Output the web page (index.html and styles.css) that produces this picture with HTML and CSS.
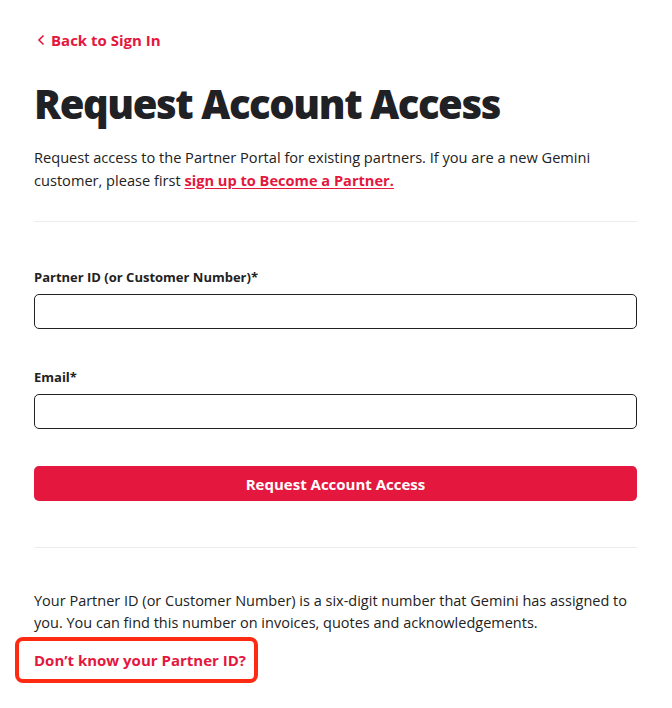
FILE: index.html
```html
<!DOCTYPE html>
<html lang="en">
<head>
<meta charset="utf-8">
<link rel="stylesheet" href="styles.css">
<title>Request Account Access</title>
</head>
<body>
<main class="page">
  <a class="back" href="#"><svg class="chev" width="8" height="12" viewBox="0 0 8 12"><path d="M6.5 1.5 L2 6 L6.5 10.5" fill="none" stroke="currentColor" stroke-width="1.6"/></svg>Back to Sign In</a>
  <h1 class="title">Request Account Access</h1>
  <p class="intro">Request access to the Partner Portal for existing partners. If you are a new Gemini customer, please first <a class="inline-link" href="#">sign up to Become a Partner.</a></p>
  <hr class="rule">
  <form class="form">
    <label class="field">
      <span class="label">Partner ID (or Customer Number)*</span>
      <input class="input" type="text">
    </label>
    <label class="field">
      <span class="label">Email*</span>
      <input class="input" type="email">
    </label>
    <button class="submit" type="button">Request Account Access</button>
  </form>
  <hr class="rule rule-bottom">
  <p class="help">Your Partner ID (or Customer Number) is a six-digit number that Gemini has assigned to you. You can find this number on invoices, quotes and acknowledgements.</p>
  <a class="dont-know" href="#">Don’t know your Partner ID?</a>
</main>
</body>
</html>
```
FILE: styles.css
```css
* { box-sizing: border-box; }
html, body { margin: 0; padding: 0; background: #fff; }
body { font-family: "Open Sans", "Noto Sans", sans-serif; color: #222; }
.page { padding: 30px 35px 0 34px; display: flex; flex-direction: column; align-items: flex-start; }
.back { display: flex; align-items: center; gap: 6px; color: #e4173e; font-weight: 700; font-size: 15px; text-decoration: none; line-height: 20px; padding-left: 3px; }
.chev { display: block; }
.title { margin: 26px 0 0; font-size: 40px; font-weight: 800; line-height: 56px; color: #1f2124; letter-spacing: -1.4px; }
.intro { margin: 14px 0 0; font-size: 14.6px; line-height: 23px; }
.inline-link { color: #e4173e; font-weight: 700; text-decoration: underline; text-underline-offset: 2px; }
.rule { align-self: stretch; border: 0; border-top: 1px solid #ececec; margin: 29px 0 0; }
.form { align-self: stretch; display: flex; flex-direction: column; margin-top: 45px; }
.field { display: flex; flex-direction: column; gap: 7px; margin-bottom: 38px; }
.field + .field { margin-bottom: 37px; }
.label { font-size: 13px; font-weight: 700; line-height: 20px; color: #222; }
.input { height: 35px; border: 1px solid #222; border-radius: 5px; font: inherit; padding: 0 10px; }
.submit { height: 35px; border: 0; border-radius: 5px; background: #e4173e; color: #fff; font-family: inherit; font-weight: 700; font-size: 15px; }
.rule-bottom { margin-top: 46px; }
.help { margin: 42px 0 0; font-size: 14.5px; line-height: 21.5px; }
.dont-know { margin: 4px 0 0 -19px; padding: 8px 8px 8px 15px; border: 4px solid #ff2a12; border-radius: 8px; color: #e4173e; font-weight: 700; font-size: 15px; line-height: 22px; text-decoration: none; }
```
